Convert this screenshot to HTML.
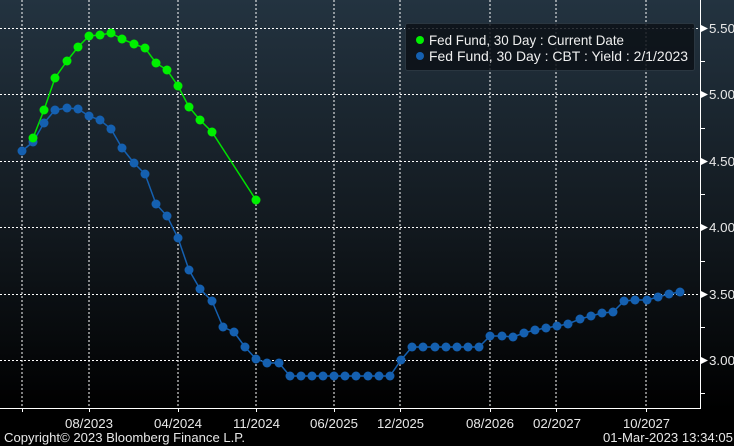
<!DOCTYPE html><html><head><style>
body{margin:0;width:734px;height:446px;overflow:hidden;background:#000;font-family:"Liberation Sans",sans-serif}
</style></head><body>
<svg width="734" height="446" xmlns="http://www.w3.org/2000/svg" style="display:block">
<defs><linearGradient id="g" x1="0" y1="0" x2="0" y2="1"><stop offset="0" stop-color="#233340"/><stop offset="0.55" stop-color="#12191f"/><stop offset="1" stop-color="#000"/></linearGradient></defs>
<rect width="734" height="410" fill="url(#g)"/>
<g stroke="#fff" stroke-width="1" stroke-dasharray="2,2" fill="none">
<path d="M22 0V408M89 0V408M178 0V408M256 0V408M334 0V408M400 0V408M490 0V408M556 0V408M646 0V408"/>
<path d="M0 28.5H700M0 94.5H700M0 161.5H700M0 227.5H700M0 294.5H700M0 360.5H700"/>
</g>
<g stroke="#fff" stroke-width="1">
<path d="M700.5 0V408M0 408.5H701"/>
<path d="M700 61.5h5M700 128.5h5M700 194.5h5M700 261.5h5M700 327.5h5M700 393.5h5"/>
<path d="M22.5 408v4M89.5 408v4M178.5 408v4M256.5 408v4M334.5 408v4M400.5 408v4M490.5 408v4M556.5 408v4M646.5 408v4"/>
</g>
<g fill="#fff"><path d="M701 25l7 3.5-7 3.5z"/><path d="M701 91l7 3.5-7 3.5z"/><path d="M701 158l7 3.5-7 3.5z"/><path d="M701 224l7 3.5-7 3.5z"/><path d="M701 291l7 3.5-7 3.5z"/><path d="M701 357l7 3.5-7 3.5z"/></g>
<g fill="#e8e8e8" font-size="13"><text x="709" y="33" textLength="26" lengthAdjust="spacingAndGlyphs">5.50</text><text x="709" y="99" textLength="26" lengthAdjust="spacingAndGlyphs">5.00</text><text x="709" y="166" textLength="26" lengthAdjust="spacingAndGlyphs">4.50</text><text x="709" y="232" textLength="26" lengthAdjust="spacingAndGlyphs">4.00</text><text x="709" y="299" textLength="26" lengthAdjust="spacingAndGlyphs">3.50</text><text x="709" y="365" textLength="26" lengthAdjust="spacingAndGlyphs">3.00</text></g>
<g fill="#e8e8e8" font-size="13">
<text x="65" y="428" textLength="48" lengthAdjust="spacingAndGlyphs">08/2023</text>
<text x="154" y="428" textLength="48" lengthAdjust="spacingAndGlyphs">04/2024</text>
<text x="233" y="428" textLength="47" lengthAdjust="spacingAndGlyphs">11/2024</text>
<text x="310" y="428" textLength="48" lengthAdjust="spacingAndGlyphs">06/2025</text>
<text x="377" y="428" textLength="47" lengthAdjust="spacingAndGlyphs">12/2025</text>
<text x="466" y="428" textLength="48" lengthAdjust="spacingAndGlyphs">08/2026</text>
<text x="533" y="428" textLength="48" lengthAdjust="spacingAndGlyphs">02/2027</text>
<text x="623" y="428" textLength="47" lengthAdjust="spacingAndGlyphs">10/2027</text></g>
<text x="4" y="442" fill="#e8e8e8" font-size="13" textLength="241" lengthAdjust="spacingAndGlyphs">Copyright© 2023 Bloomberg Finance L.P.</text>
<text x="603" y="442" fill="#e8e8e8" font-size="13" textLength="130" lengthAdjust="spacingAndGlyphs">01-Mar-2023 13:34:05</text>
<polyline fill="none" stroke="#1560b0" stroke-width="1.5" points="22,151 33,142 44,123 55,110 67,108 78,109 89,116 100,120 111,129 122,148 134,163 145,174 156,204 167,216 178,238 189,270 200,289 212,301 223,327 234,332 245,347 256,359 267,363 279,363 290,376 301,376 312,376 323,376 334,376 345,376 356,376 368,376 379,376 390,376 401,360 412,347 423,347 435,347 446,347 457,347 468,347 479,347 490,336 502,336 513,337 524,333 535,330 546,328 557,326 568,324 580,319 591,316 602,313 613,312 624,301 635,300 647,300 658,297 669,294 680,292"/>
<polyline fill="none" stroke="#00e000" stroke-width="1.5" points="33,138 44,110 55,78 67,61 78,47 89,36 100,35 111,33 122,39 134,44 145,48 156,63 167,70 178,86 189,107 200,120 212,132 256,200"/>
<g fill="#1560b0">
<circle cx="22" cy="151" r="4.5"/><circle cx="33" cy="142" r="4.5"/><circle cx="44" cy="123" r="4.5"/><circle cx="55" cy="110" r="4.5"/><circle cx="67" cy="108" r="4.5"/><circle cx="78" cy="109" r="4.5"/><circle cx="89" cy="116" r="4.5"/><circle cx="100" cy="120" r="4.5"/><circle cx="111" cy="129" r="4.5"/><circle cx="122" cy="148" r="4.5"/><circle cx="134" cy="163" r="4.5"/><circle cx="145" cy="174" r="4.5"/><circle cx="156" cy="204" r="4.5"/><circle cx="167" cy="216" r="4.5"/><circle cx="178" cy="238" r="4.5"/><circle cx="189" cy="270" r="4.5"/><circle cx="200" cy="289" r="4.5"/><circle cx="212" cy="301" r="4.5"/><circle cx="223" cy="327" r="4.5"/><circle cx="234" cy="332" r="4.5"/><circle cx="245" cy="347" r="4.5"/><circle cx="256" cy="359" r="4.5"/><circle cx="267" cy="363" r="4.5"/><circle cx="279" cy="363" r="4.5"/><circle cx="290" cy="376" r="4.5"/><circle cx="301" cy="376" r="4.5"/><circle cx="312" cy="376" r="4.5"/><circle cx="323" cy="376" r="4.5"/><circle cx="334" cy="376" r="4.5"/><circle cx="345" cy="376" r="4.5"/><circle cx="356" cy="376" r="4.5"/><circle cx="368" cy="376" r="4.5"/><circle cx="379" cy="376" r="4.5"/><circle cx="390" cy="376" r="4.5"/><circle cx="401" cy="360" r="4.5"/><circle cx="412" cy="347" r="4.5"/><circle cx="423" cy="347" r="4.5"/><circle cx="435" cy="347" r="4.5"/><circle cx="446" cy="347" r="4.5"/><circle cx="457" cy="347" r="4.5"/><circle cx="468" cy="347" r="4.5"/><circle cx="479" cy="347" r="4.5"/><circle cx="490" cy="336" r="4.5"/><circle cx="502" cy="336" r="4.5"/><circle cx="513" cy="337" r="4.5"/><circle cx="524" cy="333" r="4.5"/><circle cx="535" cy="330" r="4.5"/><circle cx="546" cy="328" r="4.5"/><circle cx="557" cy="326" r="4.5"/><circle cx="568" cy="324" r="4.5"/><circle cx="580" cy="319" r="4.5"/><circle cx="591" cy="316" r="4.5"/><circle cx="602" cy="313" r="4.5"/><circle cx="613" cy="312" r="4.5"/><circle cx="624" cy="301" r="4.5"/><circle cx="635" cy="300" r="4.5"/><circle cx="647" cy="300" r="4.5"/><circle cx="658" cy="297" r="4.5"/><circle cx="669" cy="294" r="4.5"/><circle cx="680" cy="292" r="4.5"/>
</g>
<g fill="#00f000">
<circle cx="33" cy="138" r="4.5"/><circle cx="44" cy="110" r="4.5"/><circle cx="55" cy="78" r="4.5"/><circle cx="67" cy="61" r="4.5"/><circle cx="78" cy="47" r="4.5"/><circle cx="89" cy="36" r="4.5"/><circle cx="100" cy="35" r="4.5"/><circle cx="111" cy="33" r="4.5"/><circle cx="122" cy="39" r="4.5"/><circle cx="134" cy="44" r="4.5"/><circle cx="145" cy="48" r="4.5"/><circle cx="156" cy="63" r="4.5"/><circle cx="167" cy="70" r="4.5"/><circle cx="178" cy="86" r="4.5"/><circle cx="189" cy="107" r="4.5"/><circle cx="200" cy="120" r="4.5"/><circle cx="212" cy="132" r="4.5"/><circle cx="256" cy="200" r="4.5"/>
</g>
<rect x="405.5" y="23.5" width="289" height="47" rx="2" fill="#0c1116" fill-opacity="0.85" stroke="#2a3640"/>
<circle cx="420" cy="40" r="4" fill="#00f000"/><circle cx="420" cy="56" r="4" fill="#1560b0"/>
<g fill="#f0f0f0" font-size="14"><text x="429" y="45" textLength="195" lengthAdjust="spacingAndGlyphs">Fed Fund, 30 Day : Current Date</text><text x="429" y="61" textLength="259" lengthAdjust="spacingAndGlyphs">Fed Fund, 30 Day : CBT : Yield : 2/1/2023</text></g>
</svg>
</body></html>
